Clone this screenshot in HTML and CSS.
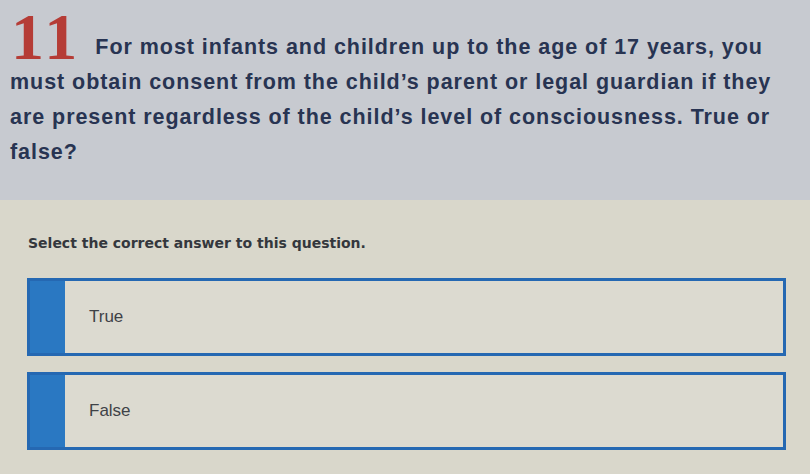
FILE: index.html
```html
<!DOCTYPE html>
<html>
<head>
<meta charset="utf-8">
<link rel="stylesheet" href="styles.css">
</head>
<body>
<div class="page">
  <section class="question">
    <p class="prompt"><span class="num">11</span>For most infants and children up to the age of 17 years, you must obtain consent from the child’s parent or legal guardian if they are present regardless of the child’s level of consciousness. True or false?</p>
  </section>
  <section class="answers">
    <p class="instruction">Select the correct answer to this question.</p>
    <div class="options">
      <div class="option"><div class="bar"></div><span class="label">True</span></div>
      <div class="option"><div class="bar"></div><span class="label">False</span></div>
    </div>
  </section>
</div>
</body>
</html>
```
FILE: styles.css
```css
html, body {
  margin: 0;
  padding: 0;
}
body {
  width: 810px;
  height: 474px;
  overflow: hidden;
  background: #d8d6cb;
}
.page {
  display: flex;
  flex-direction: column;
  height: 474px;
}
.question {
  height: 200px;
  box-sizing: border-box;
  padding: 30px 24px 0 10px;
  background: #c7cad0;
}
.prompt {
  margin: 0;
  font-family: "Liberation Sans", Arial, sans-serif;
  font-weight: bold;
  font-size: 21.5px;
  line-height: 35px;
  color: #283452;
  letter-spacing: 0.95px;
}
.num {
  font-family: "Liberation Serif", "Times New Roman", serif;
  font-weight: bold;
  font-size: 66px;
  line-height: 0;
  vertical-align: -5px;
  color: #b53c36;
  letter-spacing: 4px;
  margin: 0 14px 0 1px;
}
.answers {
  flex: 1;
  padding: 33px 24px 0 27px;
  background: #d9d7cb;
}
.instruction {
  margin: 0 0 25px 1px;
  font-family: "DejaVu Sans", Verdana, sans-serif;
  font-weight: bold;
  font-size: 14px;
  line-height: 20px;
  color: #34373d;
}
.options {
  display: flex;
  flex-direction: column;
  gap: 16px;
}
.option {
  display: flex;
  align-items: center;
  height: 78px;
  box-sizing: border-box;
  border: 3px solid #2568b2;
  background: #dcdad0;
}
.bar {
  width: 35px;
  align-self: stretch;
  background: #2a78c2;
}
.label {
  margin-left: 24px;
  font-family: "Liberation Sans", Arial, sans-serif;
  font-size: 17px;
  color: #3f4247;
}
```
